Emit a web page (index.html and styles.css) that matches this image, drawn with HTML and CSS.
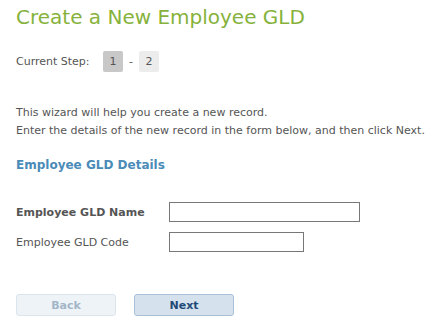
FILE: index.html
```html
<!DOCTYPE html>
<html>
<head>
<meta charset="utf-8">
<link rel="stylesheet" href="styles.css">
</head>
<body>
<div class="page">
  <h1 class="title">Create a New Employee GLD</h1>
  <div class="steps">
    <span class="steps-label">Current Step:</span>
    <span class="step step-active">1</span>
    <span class="step-sep">-</span>
    <span class="step">2</span>
  </div>
  <div class="intro">
    <p>This wizard will help you create a new record.</p>
    <p>Enter the details of the new record in the form below, and then click Next.</p>
  </div>
  <h2 class="section">Employee GLD Details</h2>
  <div class="form">
    <div class="row">
      <label class="label label-req">Employee GLD Name</label>
      <input class="input input-long" type="text">
    </div>
    <div class="row">
      <label class="label">Employee GLD Code</label>
      <input class="input input-short" type="text">
    </div>
  </div>
  <div class="buttons">
    <button class="btn btn-disabled">Back</button>
    <button class="btn btn-primary">Next</button>
  </div>
</div>
</body>
</html>
```

FILE: styles.css
```css
html, body {
  margin: 0;
  padding: 0;
  background: #ffffff;
}
body {
  font-family: "DejaVu Sans", sans-serif;
  font-size: 11px;
  color: #555555;
}
.page {
  padding: 0 16px;
}
.title {
  margin: 0;
  padding-top: 5px;
  height: 30px;
  line-height: 24px;
  font-family: "DejaVu Sans", sans-serif;
  font-weight: normal;
  font-size: 20px;
  color: #86b23c;
}
.steps {
  display: flex;
  align-items: center;
  margin-top: 16px;
  height: 21px;
}
.steps-label {
  width: 87px;
}
.step {
  display: flex;
  align-items: center;
  justify-content: center;
  width: 20px;
  height: 21px;
  border-radius: 2px;
  background: #ececec;
}
.step-active {
  background: #c8c8c8;
}
.step-sep {
  width: 16px;
  text-align: center;
}
.intro {
  margin-top: 32px;
}
.intro p {
  margin: 0;
  line-height: 18px;
}
.section {
  margin: 16px 0 0;
  font-size: 12px;
  font-weight: bold;
  color: #4a8bb8;
  line-height: 18px;
}
.form {
  margin-top: 28px;
  display: flex;
  flex-direction: column;
  gap: 10px;
}
.row {
  display: flex;
  align-items: center;
}
.label {
  width: 153px;
}
.label-req {
  font-weight: bold;
}
.input {
  box-sizing: border-box;
  height: 20px;
  margin: 0;
  border: 1px solid #777777;
  background: #ffffff;
  padding: 0 2px;
}
.input-long {
  width: 191px;
}
.input-short {
  width: 135px;
}
.buttons {
  display: flex;
  gap: 18px;
  margin-top: 42px;
}
.btn {
  box-sizing: border-box;
  width: 100px;
  height: 22px;
  border-radius: 3px;
  font-family: "DejaVu Sans", sans-serif;
  font-size: 11px;
  font-weight: bold;
  padding: 0;
}
.btn-disabled {
  background: #eef3f8;
  border: 1px solid #dbe5ee;
  color: #a3b6c8;
}
.btn-primary {
  background: #d5e2ed;
  border: 1px solid #a8c0d6;
  color: #1f4a78;
}
```
